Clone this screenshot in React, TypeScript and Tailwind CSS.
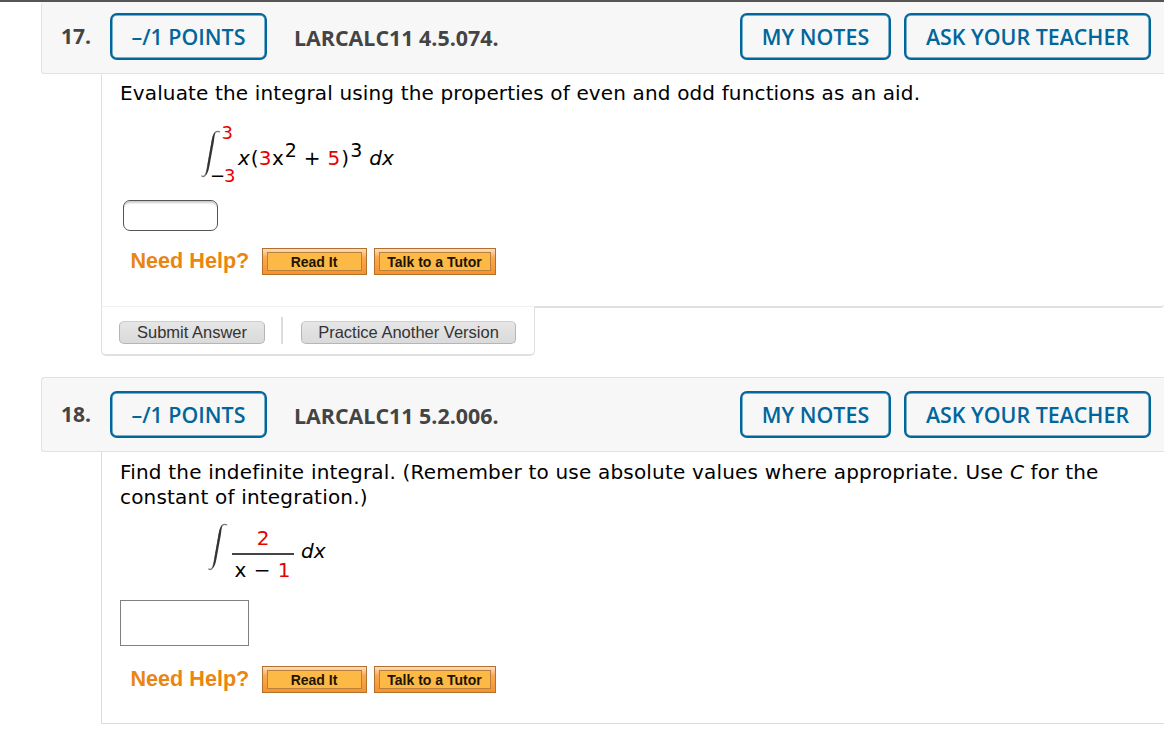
import { ReactNode } from 'react'

interface QuestionHeaderProps {
  number: string
  title: string
  className: string
}

function HeaderButton({
  children,
  className,
}: {
  children: ReactNode
  className: string
}) {
  return (
    <button
      className={`flex h-[47px] shrink-0 items-center justify-center whitespace-nowrap rounded-[7px] border-2 border-[#00669c] pt-px font-['Open_Sans',sans-serif] text-[21.4px] font-semibold leading-none text-[#00669c] shadow-[inset_0_0_0_0.5px_#00669c] ${className}`}
    >
      {children}
    </button>
  )
}

function QuestionHeader({ number, title, className }: QuestionHeaderProps) {
  return (
    <header
      className={`ml-[41px] flex items-start rounded-l-[3px] border-b-[1.5px] border-l-[1.5px] border-[#e2e2e2] bg-[#f7f7f7] pr-[13px] font-['Open_Sans',sans-serif] text-[#444] ${className}`}
    >
      <span className="mt-[9px] w-[68px] pl-[19px] text-[21px] font-bold leading-[28px]">
        {number}
      </span>
      <HeaderButton className="w-[157px]">–/1 POINTS</HeaderButton>
      <h2 className="ml-[27px] mt-[11px] whitespace-nowrap text-[21.4px] font-bold leading-[28px]">
        {title}
      </h2>
      <HeaderButton className="ml-auto w-[151px]">MY NOTES</HeaderButton>
      <HeaderButton className="ml-[13px] w-[247px]">
        ASK YOUR TEACHER
      </HeaderButton>
    </header>
  )
}

function OrangeButton({
  children,
  className,
}: {
  children: ReactNode
  className: string
}) {
  return (
    <button
      className={`h-[27px] border border-[#b0722b] bg-linear-to-b from-[#fbdcc3] via-[#f9a850] via-35% to-[#f7922d] px-[4px] py-[3px] ${className}`}
    >
      <span className="flex h-full items-center justify-center whitespace-nowrap border border-[#b98139] bg-[#fdb945] pr-px font-['Liberation_Sans',sans-serif] text-[14px] font-bold leading-none text-[#1c1404]">
        {children}
      </span>
    </button>
  )
}

function NeedHelp({ className }: { className: string }) {
  return (
    <div className={`ml-[10px] flex h-[27px] items-center ${className}`}>
      <span className="-mt-px w-[132px] whitespace-nowrap pl-[0.5px] font-['Liberation_Sans',sans-serif] text-[21.6px] font-bold leading-none text-[#ea8511]">
        Need Help?
      </span>
      <OrangeButton className="w-[105px]">Read It</OrangeButton>
      <OrangeButton className="ml-[7px] w-[122px]">
        Talk to a Tutor
      </OrangeButton>
    </div>
  )
}

function GrayButton({
  children,
  className,
}: {
  children: ReactNode
  className: string
}) {
  return (
    <button
      className={`h-[23px] whitespace-nowrap rounded-[5px] border border-[#b5b5b5] border-t-[#cfcfcf] bg-linear-to-b from-[#e6e6e6] to-[#dadada] font-['Liberation_Sans',sans-serif] text-[16.5px] leading-none text-[#333] ${className}`}
    >
      {children}
    </button>
  )
}

function IntegralSign({ className }: { className: string }) {
  return (
    <svg
      viewBox="0 0 20 48"
      className={`h-[48px] w-[20px] shrink-0 ${className}`}
    >
      <path
        d="M0.8 46C3.5 47.6 5 45 6.2 39L11.6 9C13 2 15.4 0.6 18.6 1.8"
        fill="none"
        stroke="#777"
        strokeWidth="1.3"
        strokeLinecap="round"
      />
      <path
        d="M4.4 45.5C5.4 43 6 39 6.8 33L10.8 10C11.6 6 12.6 3.6 14.2 2.2C13.7 5 13.3 8 12.8 12L8.8 34C7.8 40 6.6 44 4.4 45.5Z"
        fill="#333"
      />
    </svg>
  )
}

function Red({ children }: { children: ReactNode }) {
  return <span className="text-[#e60000]">{children}</span>
}

export default function App() {
  return (
    <main className="h-[756px] w-full overflow-hidden bg-white font-['DejaVu_Sans',sans-serif] text-[20px] leading-[25px] text-black">
      <div className="h-[2px] bg-[#555]" />

      <section>
        <QuestionHeader
          number="17."
          title="LARCALC11 4.5.074."
          className="h-[72px] pt-[11px]"
        />
        <div className="ml-[101px] h-[234px] rounded-br-[4px] border-b-2 border-l border-[#e0e0e0] pl-[18px]">
          <p className="whitespace-nowrap pt-[7px] tracking-[0.14px]">
            Evaluate the integral using the properties of even and odd functions
            as an aid.
          </p>
          <div className="ml-[81px] mt-[16px] flex h-[68px] items-start">
            <IntegralSign className="mt-[8px]" />
            <div className="-ml-[11px] flex w-[28px] flex-col text-[18px] leading-[18px]">
              <span className="mt-[2px] pl-[11.5px]">
                <Red>3</Red>
              </span>
              <span className="mt-[25px] whitespace-nowrap tracking-[-1px]">
                −<Red>3</Red>
              </span>
            </div>
            <div className="mt-[24px] flex whitespace-nowrap">
              <i>x</i>
              <span className="ml-px">(</span>
              <Red>3</Red>
              <span className="ml-[0.5px]">x</span>
              <span className="-mt-[8px] ml-px text-[19px]">2</span>
              <span className="ml-[7px]">+</span>
              <span className="ml-[7px]">
                <Red>5</Red>
              </span>
              <span className="ml-px">)</span>
              <span className="-mt-[8px] ml-px text-[19px]">3</span>
              <i className="ml-[7px]">dx</i>
            </div>
          </div>
          <input className="ml-[3px] mt-[10px] block h-[31px] w-[95px] rounded-[7px] border-[1.5px] border-[#555] bg-white shadow-[inset_0_3px_2px_-1px_#ccc]" />
          <NeedHelp className="mt-[17px]" />
        </div>
        <div className="-mt-[2px] ml-[101px] flex h-[50px] w-[434px] items-center rounded-b-[5px] border border-b-2 border-[#e0e0e0] border-t-[#f0f0f0] bg-white pl-[17px] pt-[4px]">
          <GrayButton className="w-[146px]">Submit Answer</GrayButton>
          <div className="-mt-[5px] ml-[16px] h-[27px] w-[2px] bg-[#dcdcdc]" />
          <GrayButton className="ml-[18px] w-[215px]">
            Practice Another Version
          </GrayButton>
        </div>
      </section>

      <section className="mt-[21px]">
        <QuestionHeader
          number="18."
          title="LARCALC11 5.2.006."
          className="h-[75px] border-t-[1.5px] pt-[13px]"
        />
        <div className="ml-[101px] h-[272px] border-b border-l border-[#dcdcdc] pl-[18px]">
          <p className="whitespace-nowrap pt-[8px] tracking-[0.19px]">
            Find the indefinite integral. (Remember to use absolute values where
            appropriate. Use <i>C</i> for the
            <br />
            constant of integration.)
          </p>
          <div className="ml-[88px] mt-[14px] flex h-[62px] items-start">
            <IntegralSign className="-mt-px" />
            <div className="ml-[4px] w-[62px]">
              <div className="h-[31px] border-b-2 border-[#444] pt-[2px] text-center">
                <Red>2</Red>
              </div>
              <div className="mt-[3px] whitespace-nowrap pl-[2.5px] tracking-[0.5px]">
                x − <Red>1</Red>
              </div>
            </div>
            <i className="ml-[7px] mt-[15px]">dx</i>
          </div>
          <input className="mt-[14px] block h-[46px] w-[129px] border-[1.5px] border-[#808080] bg-white" />
          <NeedHelp className="mt-[20px]" />
        </div>
      </section>
    </main>
  )
}
